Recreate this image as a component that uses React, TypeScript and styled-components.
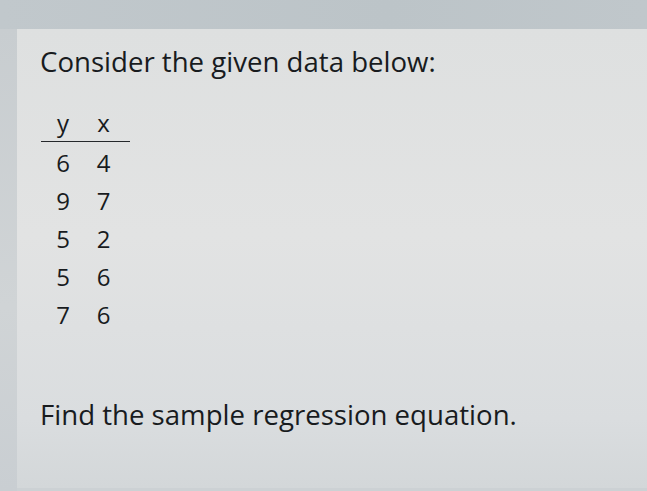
import styled, { createGlobalStyle } from 'styled-components';

const GlobalStyle = createGlobalStyle`
  html, body {
    margin: 0;
    padding: 0;
    background: #bfc6ca;
  }
  body {
    font-family: "Open Sans", "Noto Sans", sans-serif;
    color: #181b1e;
  }
`;

const rows: [number, number][] = [
  [6, 4],
  [9, 7],
  [5, 2],
  [5, 6],
  [7, 6],
];

export default function App() {
  return (
    <>
      <GlobalStyle />
      <Screen>
        <TopBand />
        <Body>
          <SideStrip />
          <Panel>
            <Heading>Consider the given data below:</Heading>
            <DataTable>
              <thead>
                <tr>
                  <HeadCell>y</HeadCell>
                  <HeadCell>x</HeadCell>
                </tr>
              </thead>
              <tbody>
                {rows.map(([y, x], i) => (
                  <tr key={i}>
                    <Cell $first={i === 0}>{y}</Cell>
                    <Cell $first={i === 0}>{x}</Cell>
                  </tr>
                ))}
              </tbody>
            </DataTable>
            <Question>Find the sample regression equation.</Question>
          </Panel>
        </Body>
      </Screen>
    </>
  );
}

const Screen = styled.div`
  width: 647px;
  height: 491px;
  display: flex;
  flex-direction: column;
  overflow: hidden;
  background: linear-gradient(180deg, #c3c9cd 0%, #bdc4c8 100%);
`;

const TopBand = styled.div`
  height: 29px;
  flex: none;
  background: linear-gradient(90deg, #c1c8cc 0%, #bcc4c8 60%, #c0c7cb 100%);
`;

const Body = styled.div`
  flex: 1;
  display: flex;
`;

const SideStrip = styled.div`
  width: 17px;
  flex: none;
  background: linear-gradient(180deg, #c8cdd0 0%, #d0d4d6 60%, #c9ced2 100%);
`;

const Panel = styled.div`
  flex: 1;
  padding: 14px 0 0 23px;
  background: linear-gradient(180deg, #dee0e0 0%, #e2e3e3 45%, #dadddf 85%, #d3d7d9 100%);
  border-bottom: 3px solid #ccd1d4;
`;

const Heading = styled.div`
  font-size: 27.6px;
  line-height: 36px;
`;

const DataTable = styled.table`
  margin-top: 31px;
  margin-left: 1px;
  border-collapse: collapse;
  font-size: 24px;
`;

const HeadCell = styled.th`
  font-weight: 400;
  width: 44px;
  padding: 0 0 5px;
  line-height: 26px;
  text-align: center;
  border-bottom: 1.5px solid #25282b;
  &:last-child {
    width: 37px;
    padding-right: 8px;
  }
`;

const Cell = styled.td<{ $first?: boolean }>`
  text-align: center;
  line-height: 38px;
  padding: ${(p) => (p.$first ? '2px' : '0')} 0 0;
  &:last-child {
    padding-right: 8px;
  }
`;

const Question = styled.div`
  margin-top: 62px;
  font-size: 27.6px;
  line-height: 36px;
`;
